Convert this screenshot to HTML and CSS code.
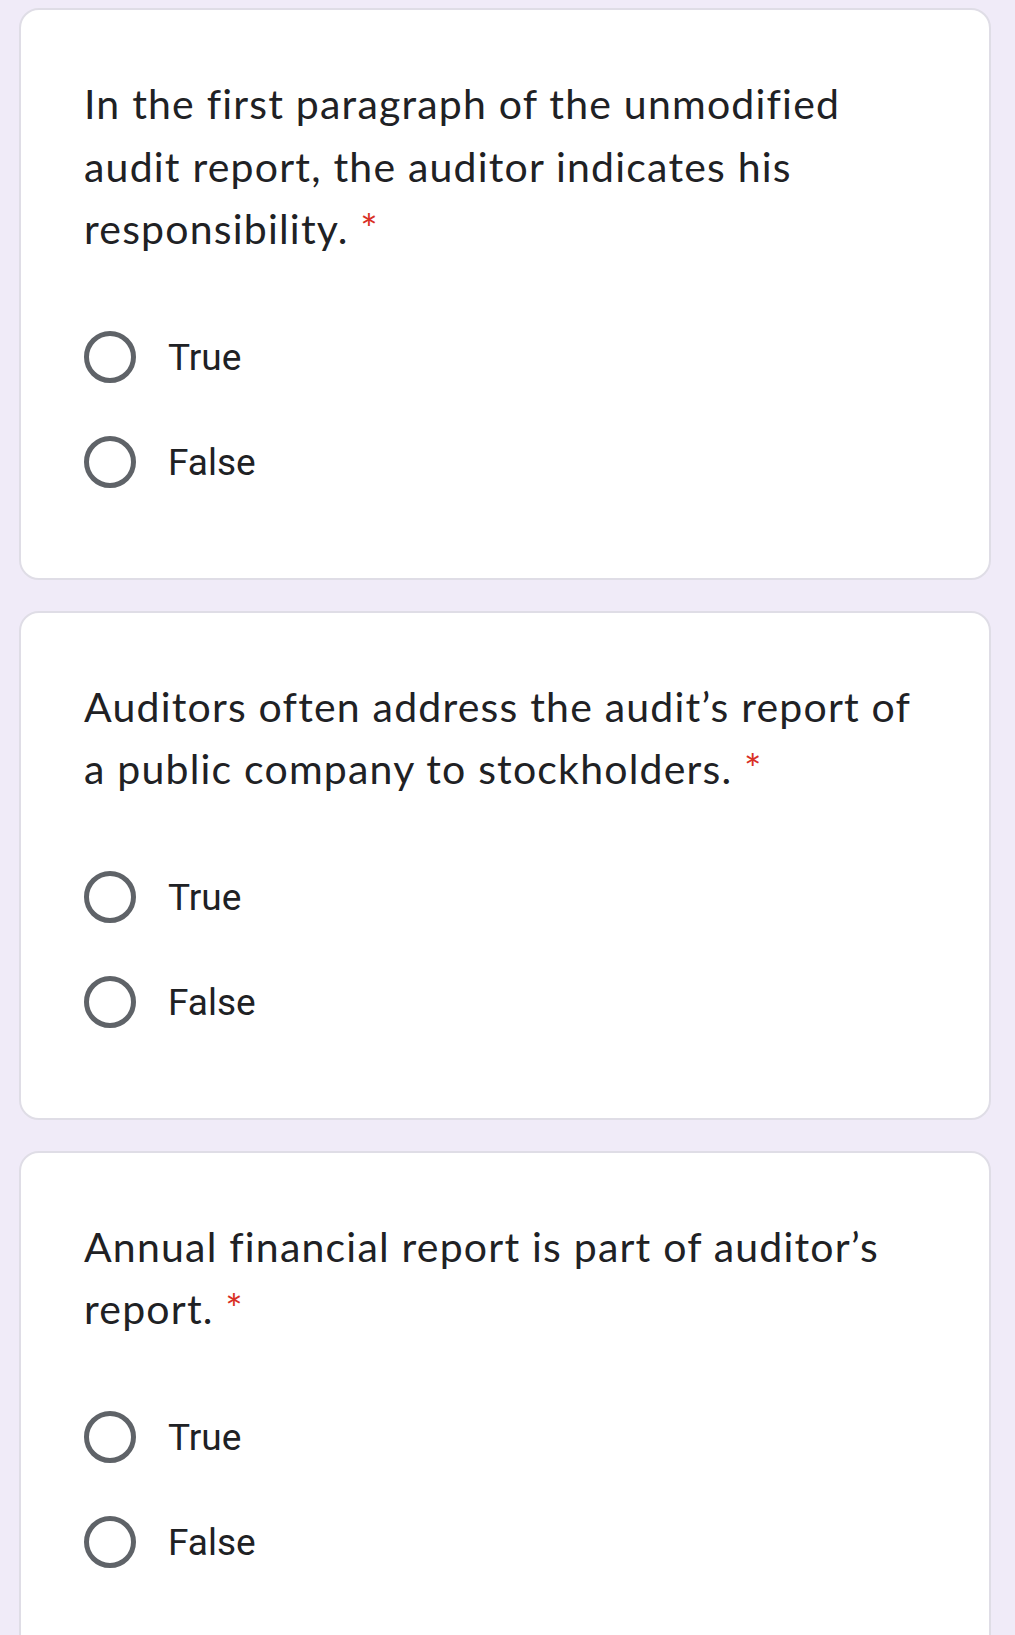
FILE: index.html
```html
<!DOCTYPE html>
<html lang="en">
<head>
  <meta charset="UTF-8">
  <meta name="viewport" content="width=device-width, initial-scale=1.0">
  <title>Quiz</title>
  <link rel="stylesheet" href="styles.css">
</head>
<body>
  <div class="form">
    <div class="card">
      <div class="question">In the first paragraph of the unmodified audit report, the auditor indicates his responsibility. <span class="req">*</span></div>
      <div class="options">
        <label class="option"><span class="radio"></span><span class="option-text">True</span></label>
        <label class="option"><span class="radio"></span><span class="option-text">False</span></label>
      </div>
    </div>

    <div class="card">
      <div class="question">Auditors often address the audit’s report of a public company to stockholders. <span class="req">*</span></div>
      <div class="options">
        <label class="option"><span class="radio"></span><span class="option-text">True</span></label>
        <label class="option"><span class="radio"></span><span class="option-text">False</span></label>
      </div>
    </div>

    <div class="card">
      <div class="question">Annual financial report is part of auditor’s report. <span class="req">*</span></div>
      <div class="options">
        <label class="option"><span class="radio"></span><span class="option-text">True</span></label>
        <label class="option"><span class="radio"></span><span class="option-text">False</span></label>
      </div>
    </div>
  </div>
</body>
</html>
```

FILE: styles.css
```css
/* Page */
html {
  box-sizing: border-box;
}
*, *:before, *:after {
  box-sizing: inherit;
}
body {
  margin: 0;
  background-color: #f0ebf8;
  color: #202124;
  font-family: Lato, "Open Sans", sans-serif;
}

.form {
  width: 972px;
  margin-left: 19px;
  padding-top: 8px;
  display: flex;
  flex-direction: column;
  gap: 31px;
}

/* Question card */
.card {
  background-color: #fff;
  border: 2px solid #dfdde6;
  border-radius: 20px;
  padding: 63px 62px 63px 63px;
}

.question {
  font-size: 41px;
  line-height: 62.5px;
  letter-spacing: 1.2px;
  max-width: 830px;
}
.req {
  color: #d93025;
}

/* Radio options */
.options {
  margin-top: 44px;
  display: flex;
  flex-direction: column;
}
.option {
  display: flex;
  align-items: center;
  height: 105px;
  gap: 32px;
}
.radio {
  width: 52px;
  height: 52px;
  border: 5px solid #5f6368;
  border-radius: 50%;
  flex-shrink: 0;
}
.option-text {
  font-family: Roboto, sans-serif;
  font-size: 37px;
  color: #202124;
}
```
